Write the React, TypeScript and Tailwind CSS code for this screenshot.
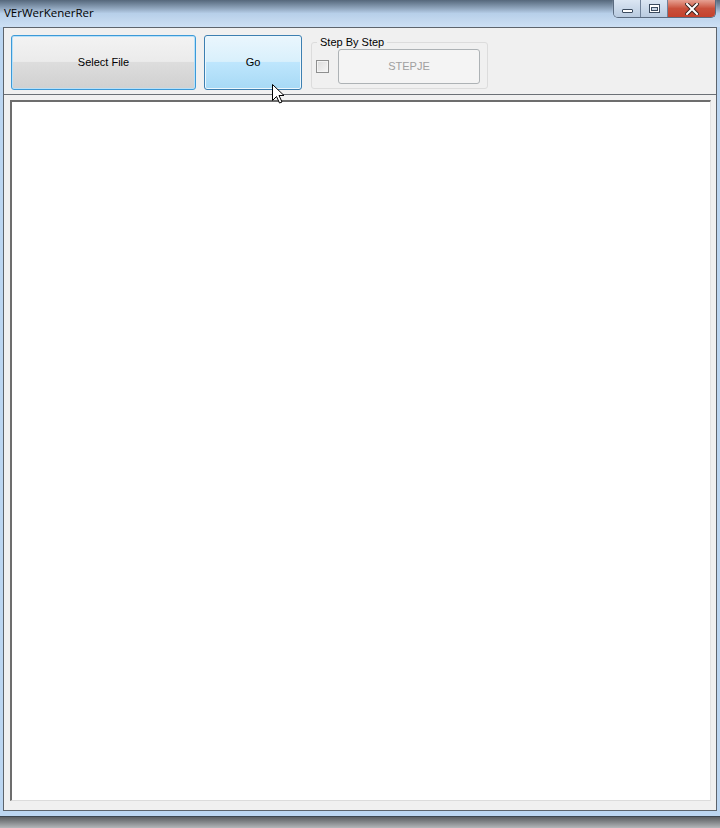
import React from 'react';

function CaptionButtons() {
  return (
    <div className="flex h-[18px] rounded-b-[5px] border border-t-0 border-[#5a6b80] overflow-hidden shadow-[0_0_1px_rgba(255,255,255,0.8)]">
      <div className="w-[27px] flex items-center justify-center bg-gradient-to-b from-[#dbe6f3] to-[#b9cbe0] border-r border-[#6f8199]">
        <div className="w-[11px] h-[4px] mt-[5px] bg-white border border-[#3b4b5f] rounded-[1px]" />
      </div>
      <div className="w-[27px] flex items-center justify-center bg-gradient-to-b from-[#dbe6f3] to-[#b9cbe0] border-r border-[#6f8199]">
        <div className="w-[11px] h-[9px] border border-[#3b4b5f] bg-white flex items-center justify-center">
          <div className="w-[7px] h-[4px] border border-[#3b4b5f] bg-[#c9d6e6]" />
        </div>
      </div>
      <div className="w-[47px] flex items-center justify-center bg-gradient-to-b from-[#e6a193] via-[#c9503b] to-[#c4412c]">
        <svg width="14" height="12" viewBox="0 0 14 12">
          <path d="M2 1 L12 11 M12 1 L2 11" stroke="#3b2420" strokeWidth="4" strokeLinecap="square" />
          <path d="M2 1 L12 11 M12 1 L2 11" stroke="#ffffff" strokeWidth="2" strokeLinecap="square" />
        </svg>
      </div>
    </div>
  );
}

function Cursor() {
  return (
    <svg width="13" height="20" viewBox="0 0 13 20" className="absolute left-[272px] top-[84px]">
      <path
        d="M0.5 0.5 L0.5 16.5 L4.5 12.5 L7.5 19 L10 18 L7 11.5 L12 11.5 Z"
        fill="#ffffff"
        stroke="#000000"
        strokeWidth="1"
        strokeLinejoin="miter"
      />
    </svg>
  );
}

export default function App() {
  return (
    <div
      className="relative w-[720px] h-[828px] flex flex-col bg-[#a7abaf] overflow-hidden"
      style={{ fontFamily: '"Liberation Sans", Arial, sans-serif' }}
    >
      {/* Window */}
      <div className="h-[817px] flex flex-col bg-[#bcd6f1] border-b border-[#3d4650]">
        {/* Title bar */}
        <div className="h-[27px] flex items-start justify-between bg-gradient-to-b from-[#55677b] via-[#b7cfe9] to-[#cde0f4]">
          <span
            className="pl-[4px] pt-[6px] text-[11.5px] leading-[14px] text-black"
            style={{ fontFamily: '"Open Sans", "Noto Sans", sans-serif' }}
          >
            VErWerKenerRer
          </span>
          <div className="mr-[4px]">
            <CaptionButtons />
          </div>
        </div>

        {/* Client area */}
        <div className="flex-1 mx-[3px] mb-[5px] flex flex-col bg-[#f0f0f0] border border-[#5d646c]">
          {/* Toolbar panel */}
          <div className="h-[67px] flex items-start pl-[7px] pt-[7px] border-b border-[#6b7076]">
            <button className="w-[185px] h-[55px] rounded-[3px] border border-[#3c9ad8] shadow-[inset_0_0_0_1px_#b8e0f8] bg-[linear-gradient(to_bottom,#f3f3f3_0%,#ebebeb_48%,#dddddd_50%,#d0d0d0_100%)] text-[11px] text-black">
              Select File
            </button>
            <button className="ml-[8px] w-[98px] h-[55px] rounded-[3px] border border-[#3c7fb1] shadow-[inset_0_0_0_1px_#ecf7fd] bg-[linear-gradient(to_bottom,#eaf6fd_0%,#d9f0fc_48%,#bee6fd_50%,#a7d9f5_100%)] text-[11px] text-black">
              Go
            </button>

            {/* Group box */}
            <div className="relative ml-[9px] mt-[7px] w-[177px] h-[47px] rounded-[3px] border border-[#dcdcdc] flex items-start gap-[9px] pl-[4px] pt-[6px]">
              <span className="absolute -top-[8px] left-[5px] px-[3px] bg-[#f0f0f0] text-[11px] leading-[14px] text-black">
                Step By Step
              </span>
              <div className="mt-[11px] w-[13px] h-[13px] border border-[#8e8f8f] bg-[linear-gradient(135deg,#dcdcdc,#f6f6f6)] shadow-[inset_0_0_0_1px_#f4f4f4]" />
              <button className="w-[142px] h-[35px] rounded-[3px] border border-[#adb2b5] bg-[#f4f4f4] text-[11px] text-[#a0a0a0]">
                STEPJE
              </button>
            </div>
          </div>

          {/* Output box */}
          <div className="flex-1 pl-[6px] pr-[5px] pt-[5px] pb-[9px] flex">
            <div className="flex-1 bg-white border-t-2 border-l-2 border-t-[#6d6d6d] border-l-[#6d6d6d] border-b border-r border-b-[#dcdcdc] border-r-[#e3e3e3]" />
          </div>
        </div>
      </div>

      {/* Shadow */}
      <div className="flex-1 bg-gradient-to-b from-[#5c5f62] to-[#b4b7ba]" />

      <Cursor />
    </div>
  );
}
